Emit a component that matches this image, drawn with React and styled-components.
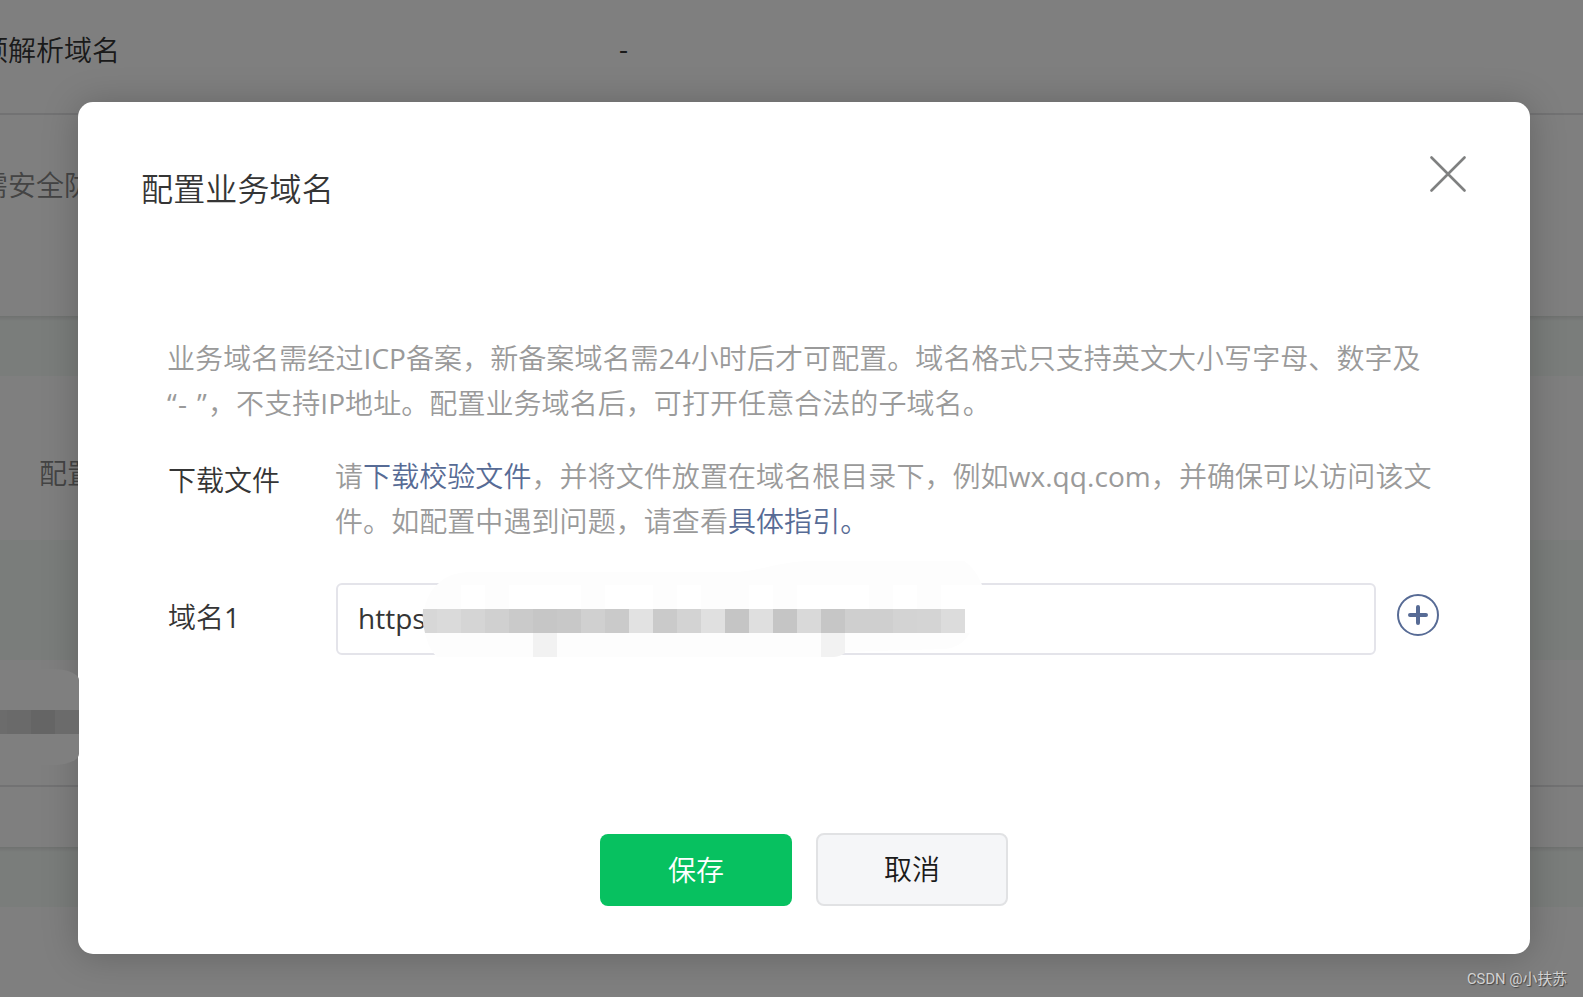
import React from "react";
import styled, { createGlobalStyle } from "styled-components";

const GlobalStyle = createGlobalStyle`
  * {
    box-sizing: border-box;
  }

  body {
    margin: 0;
    overflow: hidden;
    font-family: "Open Sans", "Noto Sans CJK SC DemiLight", "Noto Sans CJK SC", sans-serif;
    font-size: 28px;
    font-weight: 400;
    color: #353535;
  }
`;

const Page = styled.div`
  position: relative;
  display: flex;
  flex-direction: column;
  width: 1583px;
  height: 997px;
  overflow: hidden;
  background: #fff;
`;

const Band = styled.div`
  flex: none;
  display: flex;
  height: ${({ $height }) => $height}px;
  background-color: ${({ $gap }) => ($gap ? "#f5faf7" : "#fff")};
  background-image: ${({ $shadow }) =>
    $shadow ? "linear-gradient(rgba(0, 0, 0, 0.09), transparent 5px)" : "none"};
  border-bottom: ${({ $line }) => ($line ? "2px solid #e4e4e6" : "none")};
`;

const BandText = styled.div`
  flex: none;
  width: ${({ $width }) => $width || 600}px;
  margin: ${({ $top }) => $top}px 0 0 ${({ $left }) => $left}px;
  line-height: 40px;
  white-space: nowrap;
  color: ${({ $muted }) => ($muted ? "#888" : "#353535")};
`;

const Mask = styled.div`
  position: absolute;
  inset: 0;
  padding: 102px 53px 43px 78px;
  background: rgba(0, 0, 0, 0.5);
`;

const Dialog = styled.div`
  display: flex;
  flex-direction: column;
  height: 852px;
  padding: 0 64px;
  background: #fff;
  border-radius: 15px;
  box-shadow: 0 2px 36px rgba(0, 0, 0, 0.22);
`;

const Header = styled.div`
  display: flex;
  justify-content: space-between;
  height: 234px;
`;

const Title = styled.h3`
  margin: 63px 0 0 -1px;
  font-size: 32px;
  font-weight: 400;
  line-height: 48px;
  letter-spacing: 0.15px;
`;

const CloseButton = styled.button`
  width: 36px;
  height: 36px;
  margin: 54px 0 0;
  padding: 0;
  border: 0;
  background: none;
`;

const Body = styled.div`
  height: 497px;
  padding-left: 26px;
`;

const Tips = styled.p`
  width: ${({ $width }) => $width}px;
  margin: 0 0 0 -1px;
  line-height: 45px;
  letter-spacing: 0.07px;
  white-space: nowrap;
  color: #9a9a9a;
`;

const Link = styled.a`
  color: #576b95;
`;

const Quote = styled.span`
  letter-spacing: 1.3px;
`;

const Row = styled.div`
  display: flex;
  margin-top: ${({ $top }) => $top}px;
`;

const Label = styled.label`
  flex: none;
  width: 168px;
  margin-top: ${({ $offset }) => $offset || 0}px;
  line-height: 45px;
`;

const InputBox = styled.div`
  position: relative;
  display: flex;
  align-items: center;
  width: 1040px;
  height: 72px;
  padding: 0 0 2px 20px;
  border: 2px solid #e4e4ea;
  border-radius: 6px;
`;

const Smear = styled.svg`
  position: absolute;
  top: -24px;
  left: 84px;
`;

const AddButton = styled.button`
  width: 42px;
  height: 42px;
  margin: 11px 0 0 21px;
  padding: 0;
  border: 0;
  background: none;
`;

const Footer = styled.div`
  display: flex;
  justify-content: center;
  gap: 24px;
`;

const Button = styled.button`
  width: 192px;
  height: ${({ $primary }) => ($primary ? 72 : 73)}px;
  margin-top: ${({ $primary }) => ($primary ? 1 : 0)}px;
  padding: 0 0 ${({ $primary }) => ($primary ? 2 : 3)}px;
  border: ${({ $primary }) => ($primary ? "0" : "2px solid #e1e2e4")};
  border-radius: 8px;
  background: ${({ $primary }) => ($primary ? "#07c160" : "#f5f6f8")};
  color: ${({ $primary }) => ($primary ? "#fff" : "#1a1a1a")};
  font: inherit;
`;

// the blurred out value in the list, runs over the edge of the dialog
const SideSmear = styled.div`
  position: absolute;
  top: 669px;
  left: 0;
  display: flex;
  width: 79px;
  height: 96px;
  padding-top: 41px;
  background: #7f7f7f;
  border-radius: 0 26px 26px 0 / 0 11px 11px 0;
`;

const SideCell = styled.div`
  width: ${({ $width }) => $width}px;
  height: 24px;
  background: ${({ $color }) => $color};
`;

const Watermark = styled.div`
  position: absolute;
  right: 16px;
  bottom: 8px;
  font-family: Roboto, "Noto Sans CJK SC", sans-serif;
  font-size: 14.8px;
  font-weight: 400;
  line-height: 20px;
  color: #d2d2d2;
  text-shadow: 1px 1px 1px #444;
`;

const cells = [
  "#dadada", "#d5d5d5", "#d0d0d0", "#cacaca", "#c6c6c6", "#c8c8c8",
  "#d0d0d0", "#cacaca", "#e2e2e2", "#cacaca", "#d3d3d3", "#e0e0e0",
  "#c5c5c5", "#dfdfdf", "#c5c5c5", "#d9d9d9", "#c6c6c6", "#cfcfcf",
  "#cfcfcf", "#d3d3d3", "#d4d4d4", "#dcdcdc",
];

const lightCells = [1, 3, 4, 5, 7, 8, 10, 13, 15, 16, 17, 19, 21];

const InputSmear = () => (
  <Smear width="562" height="97" viewBox="422 561 562 97">
    <path
      d="M423 620C424 604 428 592 439 583C446 576 456 572 472 572L738 572C765 570 780 561 812 561L964 561C972 566 979 576 982 585L965 585L965 633L970 633C964 643 955 648 945 649L842 652Q836 657 826 657L437 657C428 648 424 634 423 620Z"
      fill="#fdfdfd"
    />
    {lightCells.map((i) => (
      <rect key={i} x={437 + i * 24} y="585" width="24" height="24" fill="#fff" />
    ))}
    <path d="M423 609h14v24h-12q-3-12-2-24z" fill="#d7d7d7" />
    {cells.map((color, i) => (
      <rect key={i} x={437 + i * 24} y="609" width="24" height="24" fill={color} />
    ))}
    <path d="M533 633h24v24h-24z" fill="#f2f2f2" />
    <path d="M821 633h24v20q-6 4-12 4h-12z" fill="#f2f2f2" />
  </Smear>
);

const ConfigDialog = () => (
  <Dialog>
    <Header>
      <Title>配置业务域名</Title>
      <CloseButton aria-label="关闭">
        <svg width="36" height="36" viewBox="0 0 36 36" fill="none">
          <path
            d="M1.5 1.5l33 33M34.5 1.5l-33 33"
            stroke="#7f8080"
            strokeWidth="2.6"
            strokeLinecap="round"
          />
        </svg>
      </CloseButton>
    </Header>
    <Body>
      <Tips $width={1260}>
        业务域名需经过ICP备案，新备案域名需24小时后才可配置。域名格式只支持英文大小写字母、数字及
        <br />
        <Quote>“- ”</Quote>，不支持IP地址。配置业务域名后，可打开任意合法的子域名。
      </Tips>
      <Row $top={28}>
        <Label $offset={4}>下载文件</Label>
        <Tips $width={1100}>
          请<Link>下载校验文件</Link>
          ，并将文件放置在域名根目录下，例如wx.qq.com，并确保可以访问该文
          <br />
          件。如配置中遇到问题，请查看<Link>具体指引。</Link>
        </Tips>
      </Row>
      <Row $top={39}>
        <Label $offset={12}>域名1</Label>
        <InputBox>
          https
          <InputSmear />
        </InputBox>
        <AddButton aria-label="添加">
          <svg width="42" height="42" viewBox="0 0 42 42" fill="none" stroke="#576b95">
            <circle cx="21" cy="21" r="20" strokeWidth="2" />
            <path d="M21 13v16M13 21h16" strokeWidth="4" strokeLinecap="round" />
          </svg>
        </AddButton>
      </Row>
    </Body>
    <Footer>
      <Button $primary>保存</Button>
      <Button>取消</Button>
    </Footer>
  </Dialog>
);

const App = () => {
  return (
    <Page>
      <GlobalStyle />
      <Band $height={115} $line>
        <BandText $left={-20} $top={30} $width={639}>
          预解析域名
        </BandText>
        <BandText $left={0} $top={28}>
          -
        </BandText>
      </Band>
      <Band $height={201}>
        <BandText $left={-20} $top={50} $muted>
          需安全防
        </BandText>
      </Band>
      <Band $height={60} $gap $shadow />
      <Band $height={164}>
        <BandText $left={39} $top={77} $muted>
          配置
        </BandText>
      </Band>
      <Band $height={120} $gap />
      <Band $height={127} $line />
      <Band $height={60} />
      <Band $height={60} $gap $shadow />
      <Band $height={90} />
      <Mask>
        <ConfigDialog />
      </Mask>
      <SideSmear>
        <SideCell $width={7} $color="#6c6c6c" />
        <SideCell $width={24} $color="#6a6a6a" />
        <SideCell $width={24} $color="#656565" />
        <SideCell $width={24} $color="#6b6b6b" />
      </SideSmear>
      <Watermark>CSDN @小扶苏</Watermark>
    </Page>
  );
};

export default App;
